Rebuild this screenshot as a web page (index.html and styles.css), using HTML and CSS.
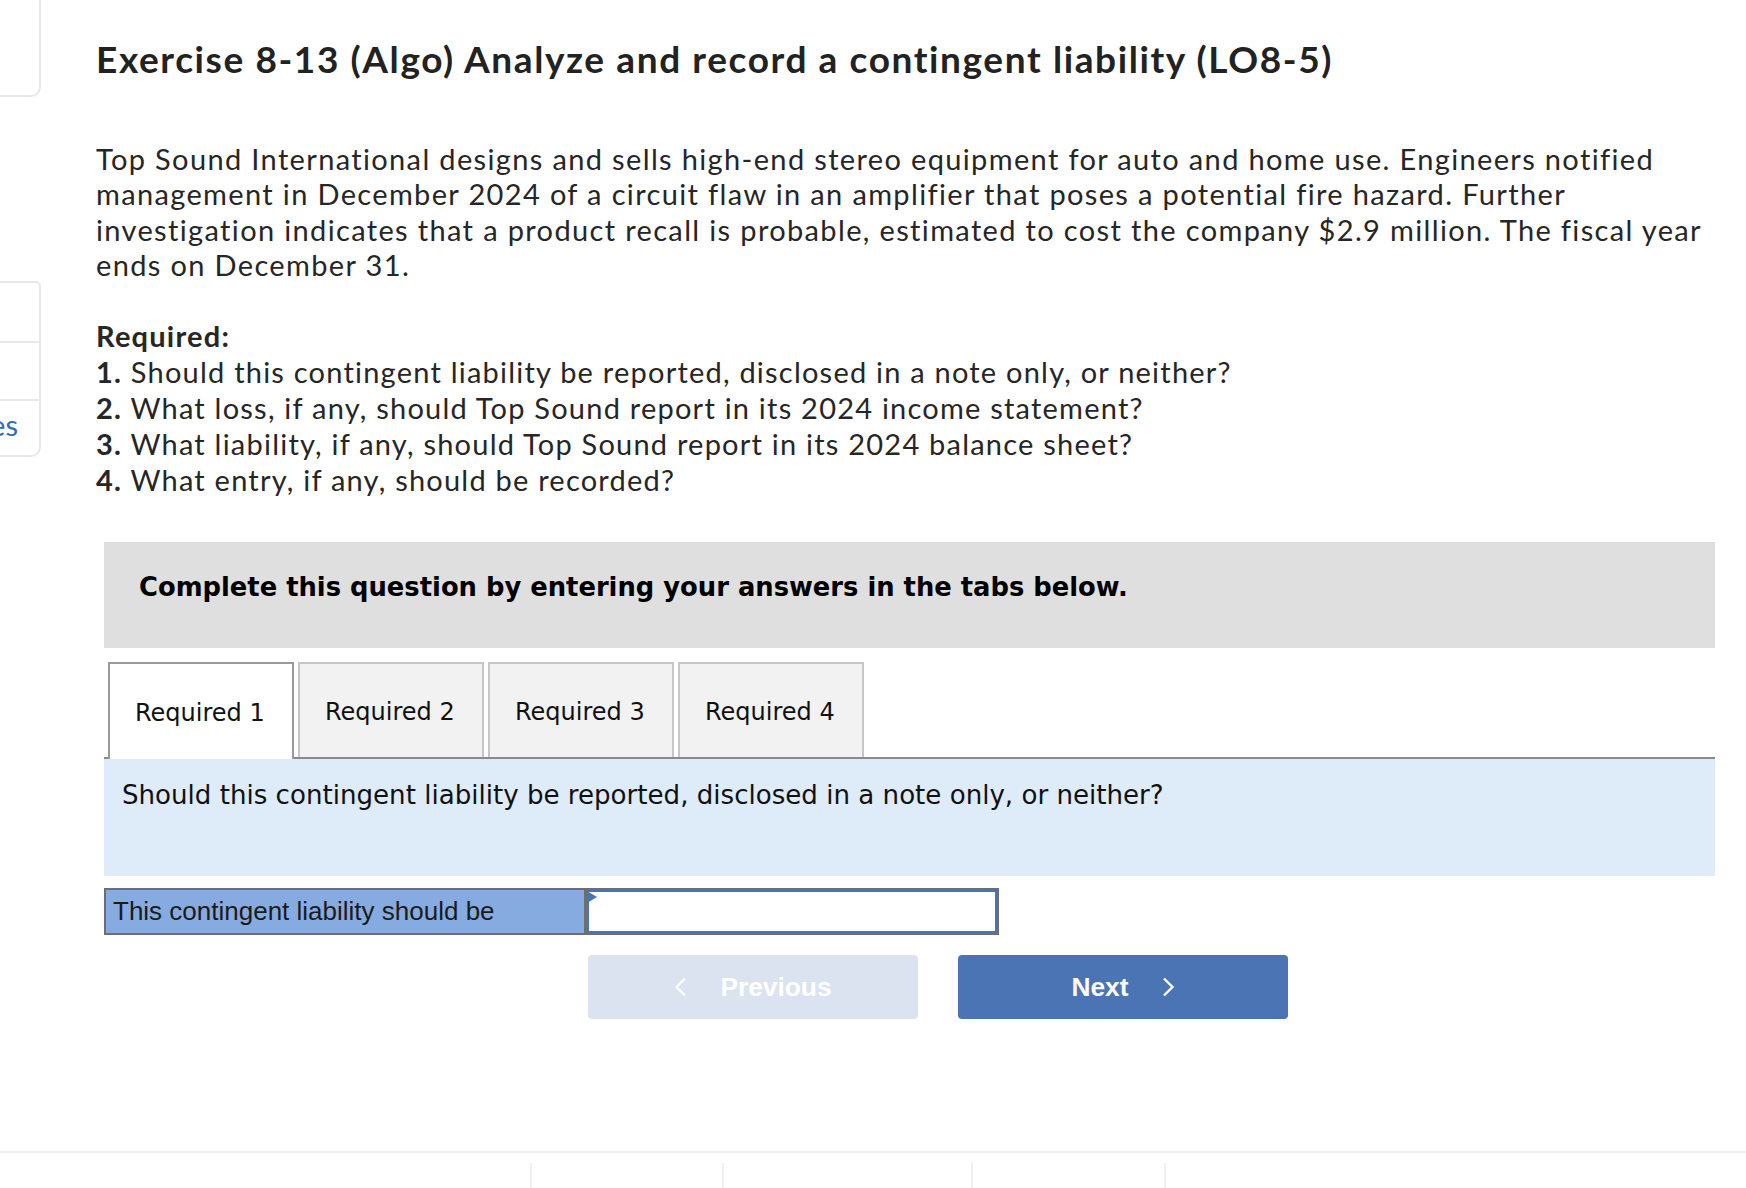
FILE: index.html
```html
<!DOCTYPE html>
<html lang="en">
<head>
<meta charset="utf-8">
<title>Exercise 8-13 (Algo)</title>
<link rel="stylesheet" href="styles.css">
</head>
<body>
<div class="page">
  <aside class="sidebar">
    <div class="side-card top"></div>
    <div class="side-card tools">
      <div class="tool-row"></div>
      <div class="tool-row"></div>
      <div class="tool-row last"><span class="tool-link">References</span></div>
    </div>
  </aside>
  <main class="main">
    <h1 class="title">Exercise 8-13 (Algo) Analyze and record a contingent liability (LO8-5)</h1>
    <p class="intro">Top Sound International designs and sells high-end stereo equipment for auto and home use. Engineers notified management in December 2024 of a circuit flaw in an amplifier that poses a potential fire hazard. Further investigation indicates that a product recall is probable, estimated to cost the company $2.9 million. The fiscal year ends on December 31.</p>
    <div class="required">
      <div class="req-head">Required:</div>
      <div><b>1.</b> Should this contingent liability be reported, disclosed in a note only, or neither?</div>
      <div><b>2.</b> What loss, if any, should Top Sound report in its 2024 income statement?</div>
      <div><b>3.</b> What liability, if any, should Top Sound report in its 2024 balance sheet?</div>
      <div><b>4.</b> What entry, if any, should be recorded?</div>
    </div>
    <section class="quiz">
      <div class="instructions">Complete this question by entering your answers in the tabs below.</div>
      <div class="tabs">
        <div class="tab active">Required 1</div>
        <div class="tab">Required 2</div>
        <div class="tab">Required 3</div>
        <div class="tab">Required 4</div>
      </div>
      <div class="question">Should this contingent liability be reported, disclosed in a note only, or neither?</div>
      <div class="answer-row">
        <div class="answer-label">This contingent liability should be</div>
        <div class="answer-input"><span class="caret"></span></div>
      </div>
      <div class="nav">
        <div class="btn prev">
          <svg class="chev" width="13" height="20" viewBox="0 0 13 20"><path d="M11 1.5 L2.5 10 L11 18.5" fill="none" stroke="#fff" stroke-width="2.4"/></svg>
          <span>Previous</span>
        </div>
        <div class="btn next">
          <span>Next</span>
          <svg class="chev" width="13" height="20" viewBox="0 0 13 20"><path d="M2 1.5 L10.5 10 L2 18.5" fill="none" stroke="#fff" stroke-width="2.4"/></svg>
        </div>
      </div>
    </section>
  </main>
</div>
<footer class="footer">
  <div class="footer-cells">
    <div class="fcell w1"></div>
    <div class="fcell w2"></div>
    <div class="fcell w3"></div>
  </div>
</footer>
</body>
</html>
```
FILE: styles.css
```css
* { box-sizing: border-box; }
html, body { margin: 0; padding: 0; background: #fff; }
body { font-family: Lato, "Noto Sans", sans-serif; color: #222; }

.page { display: flex; align-items: flex-start; }

/* left tool rail (mostly scrolled off-screen) */
.sidebar { width: 41px; flex: none; overflow: hidden; }
.side-card { width: 240px; margin-left: -199px; border: 2px solid #e8e8e8; }
.side-card.top { height: 97px; border-top: none; border-bottom-right-radius: 10px; }
.side-card.tools { margin-top: 184px; border-top-right-radius: 5px; border-bottom-right-radius: 10px; }
.tool-row { height: 60px; border-bottom: 2px solid #e8e8e8; }
.tool-row:nth-child(2) { height: 58px; }
.tool-row.last { height: 54px; border-bottom: none; text-align: right; padding-right: 21px; font-size: 29px; line-height: 48px; }
.tool-link { color: #2f6cc0; }

/* main column */
.main { flex: 1; padding: 0 31px 0 55px; }
.title { margin: 39px 0 0; font-size: 37px; line-height: 40px; font-weight: 700; letter-spacing: 1.6px; color: #222; }
.intro { margin: 62px 0 0; font-size: 29px; line-height: 35.3px; letter-spacing: 1.35px; color: #262626; }
.required { margin-top: 36px; font-size: 29px; line-height: 36px; letter-spacing: 1.22px; color: #262626; }
.req-head { font-weight: 700; }
.required b { font-weight: 700; }

.quiz { margin: 43.5px 0 0 8px; }
.instructions { background: #dfdfdf; height: 106px; padding: 30px 0 0 35px; font: 700 25.8px/30px "DejaVu Sans", Verdana, sans-serif; color: #000; }

.tabs { margin-top: 14.5px; display: flex; align-items: flex-start; gap: 4px; padding-left: 4px; border-bottom: 2px solid #8a8a8a; }
.tab { width: 186px; height: 95px; border: 2px solid #c6c6c6; border-bottom: none; background: #f2f2f2; display: flex; align-items: center; padding: 3px 0 0 25px; font: 24px "DejaVu Sans", Verdana, sans-serif; color: #111; }
.tab.active { height: 97px; margin-bottom: -2px; background: #fff; border-color: #9a9a9a; }

.question { background: #deebf8; height: 117px; padding: 20px 18px; font: 26.1px/32px "DejaVu Sans", Verdana, sans-serif; color: #111; }

.answer-row { margin-top: 12px; width: 895px; height: 47px; display: flex; border: 2px solid #6e6e6e; }
.answer-label { width: 481px; background: #86abe0; border-right: 3px solid #6e6e6e; padding-left: 7px; font: 26px/43px "Liberation Sans", Arial, sans-serif; color: #1b1b1b; white-space: nowrap; }
.answer-input { flex: 1; background: #fff; border: 2px solid #4a75b5; position: relative; }
.caret { position: absolute; left: -2px; top: -1px; width: 0; height: 0; border-left: 10px solid #4a72b8; border-top: 6.5px solid transparent; border-bottom: 6.5px solid transparent; }

.nav { margin: 20px 0 0 484px; display: flex; gap: 40px; }
.btn { width: 330px; height: 64px; border-radius: 4px; display: flex; align-items: center; justify-content: center; gap: 33px; font: 700 26.3px "Liberation Sans", Arial, sans-serif; color: #fff; }
.btn.prev { background: #dae3ef; }
.btn.next { background: #4a74b3; }
.chev { display: block; }

/* footer */
.footer { margin-top: 132px; border-top: 2px solid #efefef; padding-top: 10px; }
.footer-cells { display: flex; padding-left: 530px; }
.fcell { height: 30px; border-left: 2px solid #efefef; }
.fcell.w1 { width: 192px; }
.fcell.w2 { width: 249px; }
.fcell.w3 { width: 195px; border-right: 2px solid #efefef; }
```
